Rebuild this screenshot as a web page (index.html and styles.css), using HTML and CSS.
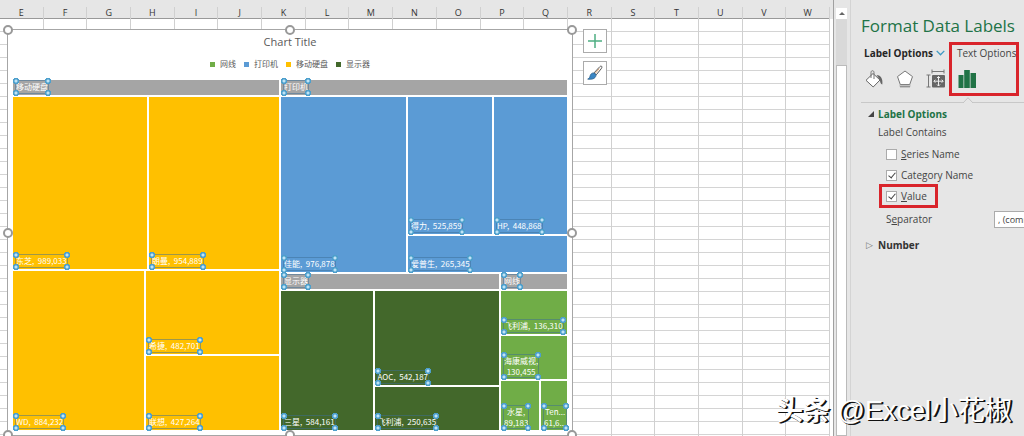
FILE: index.html
```html
<!DOCTYPE html>
<html lang="en">
<head>
  <meta charset="UTF-8" />
  <meta name="viewport" content="width=device-width, initial-scale=1.0" />
  <title>Format Data Labels</title>
  <link rel="stylesheet" href="styles.css">
</head>
<body>

  <main class="workbook">

    <!-- Worksheet -->
    <section class="sheet">
      <div class="columns">
        <div>E</div><div>F</div><div>G</div><div>H</div><div>I</div><div>J</div><div>K</div>
        <div>L</div><div>M</div><div>N</div><div>O</div><div>P</div><div>Q</div><div>R</div>
        <div>S</div><div>T</div><div>U</div><div>V</div><div>W</div>
      </div>

      <div class="canvas">
        <div class="chart">
          <i class="handle top left"></i><i class="handle top center"></i><i class="handle top right"></i>
          <i class="handle middle left"></i><i class="handle middle right"></i>
          <i class="handle bottom left"></i><i class="handle bottom center"></i><i class="handle bottom right"></i>

          <h2>Chart Title</h2>
          <ul class="legend">
            <li class="cable">网线</li>
            <li class="printer">打印机</li>
            <li class="disk">移动硬盘</li>
            <li class="display">显示器</li>
          </ul>

          <div class="treemap">
            <div class="group disks">
              <div class="banner"><span class="label">移动硬盘</span></div>
              <div class="split disks-top">
                <div class="tile disk"><span class="label">东芝, &nbsp;989,033</span></div>
                <div class="tile disk"><span class="label">朗曼, &nbsp;954,889</span></div>
              </div>
              <div class="split disks-bottom">
                <div class="tile disk"><span class="label">WD, &nbsp;884,232</span></div>
                <div class="stack disks-small">
                  <div class="tile disk"><span class="label">希捷, &nbsp;482,701</span></div>
                  <div class="tile disk"><span class="label">联想, &nbsp;427,264</span></div>
                </div>
              </div>
            </div>

            <div class="stack right-side">
              <div class="group printers">
                <div class="banner"><span class="label">打印机</span></div>
                <div class="split printers-body">
                  <div class="tile printer"><span class="label">佳能, &nbsp;976,878</span></div>
                  <div class="stack printers-small">
                    <div class="split printers-pair">
                      <div class="tile printer"><span class="label">得力, &nbsp;525,859</span></div>
                      <div class="tile printer"><span class="label">HP, &nbsp;448,868</span></div>
                    </div>
                    <div class="tile printer"><span class="label">爱普生, &nbsp;265,345</span></div>
                  </div>
                </div>
              </div>

              <div class="split lower">
                <div class="group displays">
                  <div class="banner"><span class="label">显示器</span></div>
                  <div class="split displays-body">
                    <div class="tile display"><span class="label">三星, &nbsp;584,161</span></div>
                    <div class="stack displays-small">
                      <div class="tile display"><span class="label">AOC, &nbsp;542,187</span></div>
                      <div class="tile display"><span class="label">飞利浦, &nbsp;250,635</span></div>
                    </div>
                  </div>
                </div>
                <div class="group cables">
                  <div class="banner"><span class="label">网线</span></div>
                  <div class="stack cables-body">
                    <div class="tile cable"><span class="label">飞利浦, &nbsp;136,310</span></div>
                    <div class="tile cable"><span class="label">海康威视,<br>130,455</span></div>
                    <div class="split cables-pair">
                      <div class="tile cable"><span class="label">水星,<br>89,183</span></div>
                      <div class="tile cable"><span class="label">Ten...<br>61,6...</span></div>
                    </div>
                  </div>
                </div>
              </div>
            </div>
          </div>
        </div>

        <div class="chart-buttons">
          <button type="button" aria-label="Chart Elements">
            <svg width="16" height="16" viewBox="0 0 16 16"><path d="M8 1v14M1 8h14" stroke="#4fae83" stroke-width="1.5" fill="none"/></svg>
          </button>
          <button type="button" aria-label="Chart Styles">
            <svg width="16" height="16" viewBox="0 0 16 16">
              <path d="M14.5 1.2c.8.6.3 1.7-.4 2.7L9.300 9.800 7 7.900l5-5.400c.8-.8 1.700-1.800 2.500-1.300z" fill="#fff" stroke="#555" stroke-width="1"/>
              <path d="M12.300 3.600 8.500 8" stroke="#e0a878" stroke-width="1"/>
              <path d="M6.500 8c1.500.1 2.600 1.200 2.400 2.700-.4 2.900-4.300 4.100-8.200 3.400 1.700-.7 2-1.800 2.500-3.500C3.700 9 4.900 7.900 6.500 8z" fill="#3a86c4" stroke="#2b5f8c" stroke-width=".8"/>
            </svg>
          </button>
        </div>
      </div>
    </section>

    <!-- Scroll bar -->
    <div class="scrollbar">
      <button type="button" aria-label="Scroll up"></button>
      <div class="track"></div>
      <div class="thumb"></div>
    </div>

    <!-- Task pane -->
    <aside class="pane">
      <h1>Format Data Labels</h1>

      <nav class="tabs">
        <a href="#label-options" class="active">Label Options</a>
        <svg width="9" height="6" viewBox="0 0 9 6"><path d="M.7.9 4.500 4.800 8.300.9" fill="none" stroke="#3d9ac4" stroke-width="1.300"/></svg>
        <a href="#text-options">Text Options</a>
      </nav>

      <div class="icons">
        <button type="button" aria-label="Fill and Line">
          <svg width="20" height="20" viewBox="0 0 20 20">
            <path d="M9 4.500 16 11l-6.800 7L2 11.300z" fill="#fff" stroke="#666" stroke-width="1"/>
            <path d="M7 9V3.500c0-2.400 3-2.400 3 0V10" fill="none" stroke="#777" stroke-width="1"/>
            <path d="M12.500 6c3.500 0 6.800 3 5.800 9.500-1.500-.5-2.300-2-2.300-4.500z" fill="#666"/>
          </svg>
        </button>
        <button type="button" aria-label="Effects">
          <svg width="20" height="20" viewBox="0 0 20 20">
            <path d="M5 14.500h10l1.200 3H3.800z" fill="#c8c8c8"/>
            <path d="M10 2l7.500 5.600-2.800 8H5.300l-2.800-8z" fill="#fff" stroke="#777" stroke-width="1"/>
            <path d="M5 17.800h10" stroke="#777" stroke-width="1"/>
          </svg>
        </button>
        <button type="button" aria-label="Size and Properties">
          <svg width="20" height="20" viewBox="0 0 20 20">
            <path d="M6 2.500h12M6 .5v4M18 .5v4M2.500 6v12M.5 6h4M.5 18h4" fill="none" stroke="#777" stroke-width="1"/>
            <rect x="6" y="6" width="13" height="12.500" rx="1" fill="#666"/>
            <path d="M12.500 7.500v9.500M8 12.200h9M11 9l1.500-1.500L14 9M11 15.500l1.500 1.500 1.500-1.500M9.300 10.700 7.800 12.200l1.500 1.500M15.700 10.700l1.500 1.500-1.500 1.500" fill="none" stroke="#eee" stroke-width="1"/>
          </svg>
        </button>
        <button type="button" aria-label="Label Options">
          <svg width="20" height="20" viewBox="0 0 20 20">
            <path d="M1.500 6h5v13h-5zM7.200 1h5.600v18H7.200zM13.500 4h5.500v15h-5.500z" fill="#217346"/>
          </svg>
        </button>
      </div>

      <div class="divider">
        <svg width="10" height="6" viewBox="0 0 10 6"><path d="M0 6 5 .7 10 6" fill="#e6e6e6" stroke="#c4c4c4"/></svg>
      </div>

      <section class="options" id="label-options">
        <h3 class="open">Label Options</h3>
        <p>Label Contains</p>
        <label><input type="checkbox"><span><u>S</u>eries Name</span></label>
        <label><input type="checkbox" checked><span>Cate<u>g</u>ory Name</span></label>
        <label class="marked"><input type="checkbox" checked><span><u>V</u>alue</span></label>
        <div class="separator">
          <label for="separator">S<u>e</u>parator</label>
          <select id="separator"><option>, (comma)</option></select>
        </div>
        <h3>Number</h3>
      </section>

      <div class="tab-mark"></div>
    </aside>

    <div class="watermark"><b>头条</b> @Excel小花椒</div>
  </main>

</body>
</html>
```
FILE: styles.css
```css
* {
  box-sizing: border-box;
}
body {
  margin: 0;
  font-family: "Open Sans", "Noto Sans CJK SC", sans-serif;
  background-color: #e6e6e6;
  color: #444;
}
h1, h2, h3, p, ul {
  margin: 0;
  padding: 0;
  font-weight: normal;
}
button {
  padding: 0;
  border: none;
  background: none;
}
svg {
  display: block;
}
.workbook {
  position: relative;
  display: flex;
  height: 100vh;
  overflow: hidden;
}

/* Worksheet */
.sheet {
  flex: 1;
  display: grid;
  grid-template-rows: 100%;
  padding-right: 3px;
  background: linear-gradient(#e6e6e6 19px, #fff 19px);
  border-right: 1px solid #a0a0a0;
}
.columns, .canvas {
  grid-area: 1 / 1;
}
.columns {
  display: grid;
  grid-template-columns: repeat(19, 1fr);
  padding-top: 7px;
  background: repeating-linear-gradient(transparent 0 12px, #d4d4d4 12px 13px) 0 19px no-repeat;
}
.columns div {
  border-right: 1px solid #d0d0d0;
  background: linear-gradient(#e6e6e6 11px, #999 11px, #999 12px, transparent 12px);
  font-size: 9px;
  line-height: 11px;
  text-align: center;
  color: #333;
}
.canvas {
  display: flex;
  align-items: flex-start;
  gap: 10px;
  padding: 29px 0 0 7px;
}

/* Chart */
.chart {
  position: relative;
  width: 566px;
  padding: 4px 5px 5px;
  border: 1px solid #a6a6a6;
  background-color: #fff;
}
.handle {
  position: absolute;
  width: 10px;
  height: 10px;
  border: 2px solid #999;
  border-radius: 50%;
  background-color: #fff;
}
.top { top: -5px; }
.middle { top: calc(50% - 5px); }
.bottom { bottom: -5px; }
.left { left: -5px; }
.center { left: calc(50% - 5px); }
.right { right: -5px; }
.chart h2 {
  font-size: 11px;
  line-height: 16px;
  text-align: center;
  color: #595959;
}
.legend {
  display: flex;
  justify-content: center;
  gap: 8px;
  padding: 7px 0 9px;
  list-style: none;
  font-size: 8px;
  line-height: 14px;
  color: #595959;
}
.legend li {
  display: flex;
  align-items: center;
  gap: 5px;
}
.legend li::before {
  content: "";
  width: 5px;
  height: 5px;
  background-color: var(--fill);
}
.disk { --fill: #ffc000; }
.printer { --fill: #5b9bd5; }
.display { --fill: #43682b; }
.cable { --fill: #70ad47; }

/* Treemap, tracks are proportional to the values */
.treemap, .split, .stack, .group {
  display: grid;
  gap: 2px;
  min-width: 0;
  min-height: 0;
}
.treemap {
  height: 350px;
  grid-template-columns: 266fr 286fr;
}
.group { grid-template-rows: 15px 1fr; }
.group.disks { grid-template-rows: 15px 172fr 159fr; }
.disks-top { grid-template-columns: 134fr 130fr; }
.disks-bottom { grid-template-columns: 131fr 133fr; }
.disks-small { grid-template-rows: 83fr 74fr; }
.right-side { grid-template-rows: 192fr 156fr; }
.printers-body { grid-template-columns: 125fr 159fr; }
.printers-small { grid-template-rows: 138fr 36fr; }
.printers-pair { grid-template-columns: 84fr 73fr; }
.lower { grid-template-columns: 218fr 66fr; }
.displays-body { grid-template-columns: 92fr 125fr; }
.displays-small { grid-template-rows: 94fr 43fr; }
.cables-body { grid-template-rows: 43fr 42fr 49fr; }
.cables-pair { grid-template-columns: 38fr 26fr; }
.banner, .tile {
  display: flex;
  align-items: flex-end;
  min-width: 0;
  min-height: 0;
  padding: 2px 3px;
}
.banner {
  background-color: #a5a5a5;
}
.tile {
  background-color: var(--fill);
}
.label {
  position: relative;
  outline: 1px solid rgba(60, 110, 150, 0.5);
  font: 8px/12px "Noto Sans CJK SC", sans-serif;
  text-align: center;
  white-space: nowrap;
  color: #fff;
}
.label:has(br) {
  line-height: 11px;
}
.label::before {
  content: "";
  position: absolute;
  inset: -3px;
  background:
    radial-gradient(circle, #bfe3f5 1px, #4d9fcc 2px, #4d9fcc 3px, transparent 3px) 0 0 / 6px 6px,
    radial-gradient(circle, #bfe3f5 1px, #4d9fcc 2px, #4d9fcc 3px, transparent 3px) 100% 0 / 6px 6px,
    radial-gradient(circle, #bfe3f5 1px, #4d9fcc 2px, #4d9fcc 3px, transparent 3px) 0 100% / 6px 6px,
    radial-gradient(circle, #bfe3f5 1px, #4d9fcc 2px, #4d9fcc 3px, transparent 3px) 100% 100% / 6px 6px;
  background-repeat: no-repeat;
}
.chart-buttons {
  display: grid;
  gap: 8px;
}
.chart-buttons button {
  display: grid;
  place-items: center;
  width: 24px;
  height: 24px;
  border: 1px solid #ababab;
  background-color: #fff;
}

/* Scroll bar */
.scrollbar {
  width: 17px;
  display: flex;
  flex-direction: column;
  padding: 8px 3px 0 2px;
  border-right: 1px solid #d4d4d4;
}
.scrollbar button {
  display: grid;
  place-items: center;
  height: 11px;
  background-color: #fff;
}
.scrollbar button::before {
  content: "";
  border: 3px solid transparent;
  border-top: 0;
  border-bottom-color: #666;
}
.track {
  height: 46px;
  background-color: #d9d9d9;
}
.thumb {
  flex: 1;
  border: 1px solid #bbb;
  background-color: #fff;
}

/* Task pane */
.pane {
  position: relative;
  width: 173px;
  padding: 12px 0 0 10px;
  white-space: nowrap;
  font-size: 10px;
}
.pane h1 {
  font-size: 17px;
  line-height: 28px;
  color: #217346;
}
.tabs {
  display: flex;
  align-items: center;
  padding: 5px 0 0 3px;
  line-height: 16px;
}
.tabs a {
  color: #444;
  text-decoration: none;
}
.tabs .active {
  margin-right: 3px;
  font-weight: bold;
  color: #262626;
}
.tabs svg {
  margin-right: 12px;
}
.icons {
  display: flex;
  gap: 11px;
  padding: 8px 0 13px 3px;
}
.divider {
  height: 1px;
  background-color: #c8c8c8;
}
.divider svg {
  position: relative;
  top: -5px;
  left: 102px;
}
.options {
  padding: 2px 0 0 17px;
  line-height: 18px;
}
.options h3 {
  position: relative;
  font-size: 10px;
  font-weight: bold;
  color: #333;
}
.options h3::before {
  content: "▷";
  position: absolute;
  left: -12px;
  font: 9px/18px "DejaVu Sans", sans-serif;
  color: #777;
}
.options h3.open {
  color: #217346;
}
.options h3.open::before {
  content: "";
  left: -10px;
  top: 6px;
  border: 3px solid #444;
  border-top-color: transparent;
  border-left-color: transparent;
}
.options p {
  margin-bottom: 4px;
}
.options > label {
  display: flex;
  align-items: center;
  gap: 4px;
  width: max-content;
  margin: 0 0 3px 4px;
  padding: 0 4px;
}
.options input {
  appearance: none;
  width: 11px;
  height: 11px;
  margin: 0;
  border: 1px solid #ababab;
  background-color: #fff;
}
.options input:checked::before {
  content: "";
  display: block;
  width: 3px;
  height: 6px;
  margin-left: 3px;
  border: solid #444;
  border-width: 0 1px 1px 0;
  transform: rotate(40deg);
}
.options .marked, .tab-mark {
  outline: 3px solid #d9242b;
}
.options .marked {
  padding-right: 8px;
}
.separator {
  display: flex;
  justify-content: space-between;
  align-items: center;
  padding: 2px 0 8px 8px;
}
.separator select {
  appearance: none;
  width: 60px;
  height: 17px;
  margin-right: -30px;
  padding: 0 3px;
  border: 1px solid #ababab;
  border-radius: 0;
  background-color: #fff;
  font: 9px "Open Sans", sans-serif;
  color: #444;
}
.tab-mark {
  position: absolute;
  top: 45px;
  right: 8px;
  width: 64px;
  height: 48px;
}

.watermark {
  position: absolute;
  right: 12px;
  bottom: 7px;
  font: 27px/36px "Liberation Sans", "Noto Sans CJK SC", sans-serif;
  color: #fff;
  text-shadow: 1px 1px 0 #111, 2px 1px 0 #111;
}
```
